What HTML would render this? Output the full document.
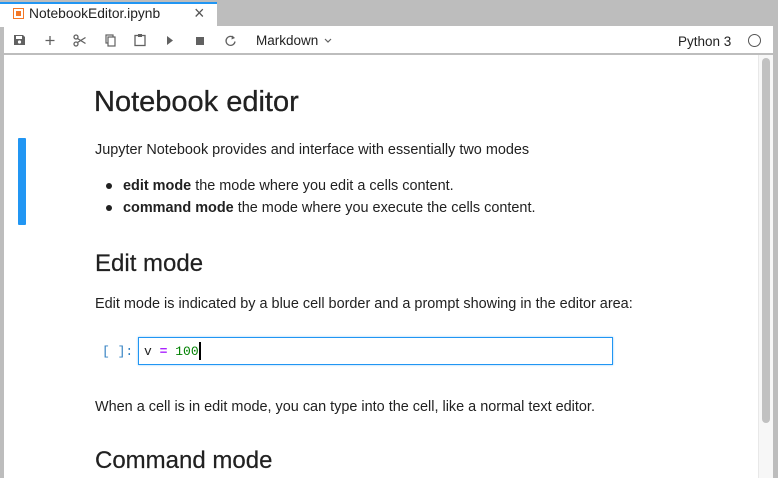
<!DOCTYPE html>
<html><head><style>
*{margin:0;padding:0;box-sizing:border-box}
body{width:778px;height:478px;background:#bdbdbd;position:relative;overflow:hidden;font-family:"Liberation Sans",sans-serif;color:#212121}
.abs{position:absolute;white-space:nowrap}
.p{font-size:14.45px}
</style></head><body>
<div class="abs" style="left:0;top:2px;width:217px;height:25px;background:#fff;border-top:2px solid #2196f3"></div>
<div class="abs" style="left:13px;top:8px;width:11px;height:11px;border:1.5px solid #f37726;background:#fff"><div style="position:absolute;left:1.5px;top:1.5px;width:5px;height:5px;background:#f37726"></div></div>
<div class="abs" style="left:29px;top:6px;font-size:13.8px;color:#222">NotebookEditor.ipynb</div>
<div class="abs" style="left:194px;top:3px;font-size:18px;color:#555">×</div>
<div class="abs" style="left:4px;top:26px;width:769px;height:28px;background:#fff;border-bottom:1px solid #bdbdbd"></div>
<svg class="abs" style="left:0;top:26px" width="400" height="28">
<g fill="#616161" stroke="#616161">
<path d="M14 9h9l2 2v8h-11z" stroke="none"/><rect x="16" y="10" width="6" height="3" fill="#fff" stroke="none"/><circle cx="19.5" cy="16" r="1.6" fill="#fff" stroke="none"/>
<path d="M50 10v9M45.5 14.5h9" fill="none" stroke-width="1.3"/>
<circle cx="76" cy="11" r="2" fill="none" stroke-width="1.3"/><circle cx="76" cy="18" r="2" fill="none" stroke-width="1.3"/><path d="M77.5 12.5l8 5M77.5 16.5l8-5" fill="none" stroke-width="1.3"/>
<rect x="106" y="9" width="7" height="8" fill="none" stroke-width="1.2"/><rect x="108" y="11" width="7" height="9" fill="#fff" stroke-width="1.2"/>
<rect x="135" y="9.5" width="10" height="10" fill="none" stroke-width="1.3"/><rect x="138" y="8" width="4" height="3" stroke="none"/>
<path d="M167 10l6 4.5-6 4.5z" stroke="none"/>
<rect x="196" y="11" width="8" height="8" stroke="none"/>
<path d="M234 12a4.5 4.5 0 1 0 1 3.5" fill="none" stroke-width="1.3"/><path d="M232 9.5l3 2.5-3.5 1.5z" stroke="none"/>
<path d="M325 13l3 3 3-3" fill="none" stroke-width="1.2"/>
</g></svg>
<div class="abs" style="left:256px;top:33px;font-size:13.5px;color:#222">Markdown</div>
<div class="abs" style="left:678px;top:34px;font-size:13.5px;color:#222">Python 3</div>
<div class="abs" style="left:748px;top:34px;width:13px;height:13px;border:1.3px solid #555;border-radius:50%"></div>
<div class="abs" style="left:4px;top:55px;width:754px;height:423px;background:#fff"></div>
<div class="abs" style="left:758px;top:55px;width:15px;height:423px;background:#f7f7f7;border-left:1px solid #e8e8e8"></div>
<div class="abs" style="left:762px;top:58px;width:8px;height:365px;background:#c1c1c1;border-radius:4px"></div>
<div class="abs" style="left:18px;top:138px;width:8px;height:87px;background:#2196f3;border-radius:1px"></div>
<div class="abs" style="left:94px;top:86px;font-size:29px;color:#212121;-webkit-text-stroke:0.3px #212121">Notebook editor</div>
<div class="abs p" style="left:95px;top:142px">Jupyter Notebook provides and interface with essentially two modes</div>
<div class="abs" style="left:106px;top:183px;width:6px;height:6px;border-radius:50%;background:#212121"></div>
<div class="abs p" style="left:123px;top:178px"><b>edit mode</b> the mode where you edit a cells content.</div>
<div class="abs" style="left:106px;top:205px;width:6px;height:6px;border-radius:50%;background:#212121"></div>
<div class="abs p" style="left:123px;top:200px"><b>command mode</b> the mode where you execute the cells content.</div>
<div class="abs" style="left:95px;top:250px;font-size:24px;-webkit-text-stroke:0.2px #212121">Edit mode</div>
<div class="abs p" style="left:95px;top:296px">Edit mode is indicated by a blue cell border and a prompt showing in the editor area:</div>
<div class="abs" style="left:102px;top:344px;font-family:'Liberation Mono',monospace;font-size:13px;color:#307fc1">[ ]:</div>
<div class="abs" style="left:138px;top:337px;width:475px;height:28px;border:1px solid #2196f3;box-shadow:0 0 2px #90caf9"></div>
<div class="abs" style="left:144px;top:344px;font-family:'Liberation Mono',monospace;font-size:13px;color:#212121">v <span style="color:#aa22ff;font-weight:bold">=</span> <span style="color:#008000">100</span></div>
<div class="abs" style="left:199px;top:342px;width:2px;height:18px;background:#000"></div>
<div class="abs p" style="left:95px;top:399px">When a cell is in edit mode, you can type into the cell, like a normal text editor.</div>
<div class="abs" style="left:95px;top:447px;font-size:24px;-webkit-text-stroke:0.2px #212121">Command mode</div>
</body></html>
